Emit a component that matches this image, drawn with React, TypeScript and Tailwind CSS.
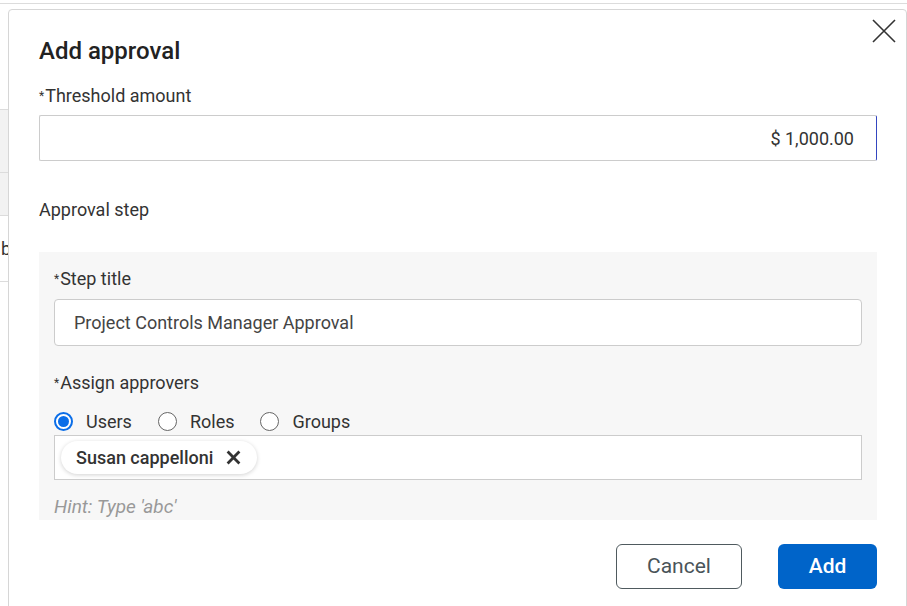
import React, { useState } from 'react';

const Required = () => <span className="relative top-[-2px] mr-[1px] text-[12px] leading-none">*</span>;

const Radio = ({ label, checked, onClick }: { label: string; checked: boolean; onClick: () => void }) => (
  <button type="button" onClick={onClick} className="flex items-center gap-[13px] h-[20px]">
    <span
      className={
        checked
          ? 'flex items-center justify-center w-[19px] h-[19px] rounded-full border-2 border-[#0b6ee8] bg-white'
          : 'w-[19px] h-[19px] rounded-full border-[1.5px] border-[#666] bg-white'
      }
    >
      {checked && <span className="w-[11px] h-[11px] rounded-full bg-[#0b6ee8]" />}
    </span>
    <span className="text-[18px] text-[#333]">{label}</span>
  </button>
);

const App = () => {
  const [kind, setKind] = useState('Users');

  return (
    <div className="relative w-[907px] h-[606px] overflow-hidden bg-white font-['Roboto',sans-serif] text-[#333]">
      {/* page behind the dialog */}
      <div className="pt-[3px]">
        <div className="border-t border-[#dcdcdc]" />
        <div className="mt-[105px] border-t border-[#dcdcdc]">
          <div className="h-[63px] bg-[#f2f2f2] border-b border-[#dcdcdc]" />
          <div className="h-[43px] bg-[#f2f2f2] border-b border-[#dcdcdc]" />
          <div className="h-[66px] flex items-center pl-[1px] text-[18px] border-b border-[#dcdcdc]">bid</div>
        </div>
      </div>

      {/* dialog */}
      <div className="absolute left-[8px] top-[9px] w-[899px] h-[620px] bg-white border border-[#d6d6d6] rounded-[4px]">
        <button type="button" className="absolute right-[10px] top-[9px] w-[24px] h-[24px] text-[#333]">
          <svg viewBox="0 0 24 24" width="24" height="24" fill="none" stroke="currentColor" strokeWidth="1.6">
            <path d="M1 1 L23 23 M23 1 L1 23" />
          </svg>
        </button>

        <div className="pl-[30px] pr-[29px] pt-[27px]">
          <h2 className="text-[24px] leading-[28px] font-medium text-[#222]">Add approval</h2>

          <label className="block mt-[21px] text-[18px] leading-[20px]">
            <Required />Threshold amount
          </label>
          <div className="mt-[9px] h-[46px] flex items-center justify-end pr-[22px] border border-[#cccccc] border-r-[#3446c0] rounded-[2px] text-[18px] text-[#333]">
            $ 1,000.00
          </div>

          <div className="mt-[39px] text-[18px] leading-[20px]">Approval step</div>

          <div className="mt-[32px] h-[268px] bg-[#f7f7f7] px-[15px] pt-[17px]">
            <label className="block text-[18px] leading-[20px]">
              <Required />Step title
            </label>
            <div className="mt-[10px] h-[47px] flex items-center pl-[19px] bg-white border border-[#cccccc] rounded-[4px] text-[18px] text-[#444]">
              Project Controls Manager Approval
            </div>

            <label className="block mt-[27px] text-[18px] leading-[20px]">
              <Required />Assign approvers
            </label>
            <div className="mt-[18px] flex items-center gap-[26px]">
              {['Users', 'Roles', 'Groups'].map((k) => (
                <Radio key={k} label={k} checked={kind === k} onClick={() => setKind(k)} />
              ))}
            </div>
            <div className="mt-[4px] h-[45px] flex items-center pl-[6px] bg-white border border-[#cccccc]">
              <span className="flex items-center h-[33px] pl-[15px] pr-[16px] gap-[13px] rounded-full bg-white shadow-[0_1px_4px_rgba(0,0,0,0.18)] text-[18px] font-medium text-[#333]">
                Susan cappelloni
                <svg viewBox="0 0 14 14" width="15" height="15" fill="none" stroke="#333" strokeWidth="2.6">
                  <path d="M1.5 1.5 L12.5 12.5 M12.5 1.5 L1.5 12.5" />
                </svg>
              </span>
            </div>
            <div className="mt-[17px] text-[19px] leading-[20px] italic text-[#999]">Hint: Type 'abc'</div>
          </div>

          <div className="mt-[24px] flex justify-end gap-[36px]">
            <button
              type="button"
              className="w-[126px] h-[45px] rounded-[6px] border border-[#4f5a5e] bg-white text-[21px] text-[#4a5459]"
            >
              Cancel
            </button>
            <button
              type="button"
              className="w-[99px] h-[45px] rounded-[6px] bg-[#0064c9] text-[21px] font-medium text-white"
            >
              Add
            </button>
          </div>
        </div>
      </div>
    </div>
  );
};

export default App;
